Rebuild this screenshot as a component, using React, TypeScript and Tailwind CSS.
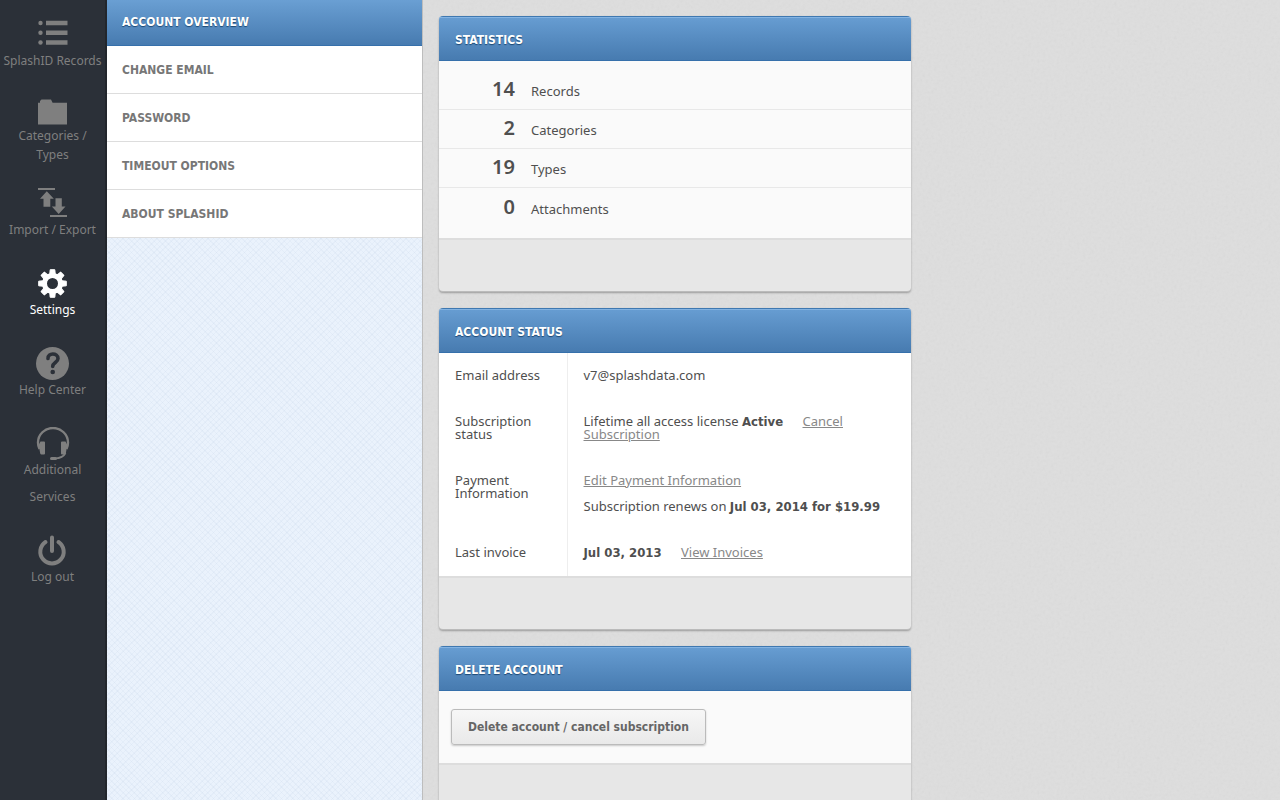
import type { ReactNode } from 'react';

type NavItem = {
  lines: string[];
  icon: ReactNode;
  active?: boolean;
  tight?: boolean;
  spaced?: boolean;
};

const navItems: NavItem[] = [
  {
    lines: ['SplashID Records'],
    tight: true,
    icon: (
      <>
        <circle cx="4.500" cy="5" r="2.2" />
        <circle cx="4.500" cy="14.700" r="2.2" />
        <circle cx="4.500" cy="24.500" r="2.2" />
        <path d="M10 2.800h21.500v4.500H10zM10 12.500h21.500V17H10zM10 22.300h21.500v4.500H10z" />
      </>
    ),
  },
  {
    lines: ['Categories /', 'Types'],
    tight: true,
    icon: <path d="M2 9.800h2V8L5.500 6.500h9.500L16.500 9.500v.3H31v21.700H2z" />,
  },
  {
    lines: ['Import / Export'],
    icon: (
      <path d="M2 1h17v2H2zM10.800 4.300l7 7.500h-3.500v8H7.500v-8H4zM19.500 11.300h6.300v8.200h3.700l-6.800 7.500-6.900-7.500h3.700zM14 28h17v2H14z" />
    ),
  },
  {
    lines: ['Settings'],
    active: true,
    icon: (
      <>
        <circle cx="16.500" cy="16.500" r="8" fill="none" stroke="currentColor" strokeWidth="5" />
        {[0, 45, 90, 135, 180, 225, 270, 315].map((angle) => (
          <path
            key={angle}
            d="M13.700 7.500l.5-4.800h4.600l.5 4.800z"
            strokeWidth="1"
            stroke="currentColor"
            strokeLinejoin="round"
            transform={`rotate(${angle} 16.5 16.5)`}
          />
        ))}
      </>
    ),
  },
  {
    lines: ['Help Center'],
    icon: (
      <>
        <circle cx="16.500" cy="16.500" r="16.500" />
        <path d="M12 11.500C11.500 5.500 22 5.500 22 11.500c0 4-5.300 4-5.300 8" fill="none" stroke="#2b3038" strokeWidth="3.600" strokeLinecap="round" />
        <circle cx="16.700" cy="25" r="2.300" fill="#2b3038" />
      </>
    ),
  },
  {
    lines: ['Additional', 'Services'],
    spaced: true,
    icon: (
      <>
        <path d="M3.500 22C2 19 2 17 2 15.500a15 14.500 0 0 1 30 0c0 1.500 0 3.500-1.500 6.500" fill="none" stroke="currentColor" strokeWidth="2.400" />
        <path d="M4.500 14.500H8q1 0 1 1v11q0 1-1 1H5.500q-1 0-1.300-1L2.700 18zM29.500 14.500H26q-1 0-1 1v11q0 1 1 1h2.500q1 0 1.300-1l1.500-8.500z" />
        <path d="M29.500 26c-2 4-5 5.200-10.500 5.500" fill="none" stroke="currentColor" strokeWidth="1.700" />
        <rect x="14" y="30" width="7" height="3" rx="1.500" />
      </>
    ),
  },
  {
    lines: ['Log out'],
    icon: (
      <path d="M9.500 8a11.700 11.700 0 1 0 13 0M16 3.500V17" fill="none" stroke="currentColor" strokeWidth="4" strokeLinecap="round" />
    ),
  },
];

const menu = ['Change Email', 'Password', 'Timeout Options', 'About SplashID'];

const stats = [
  { value: 14, label: 'Records' },
  { value: 2, label: 'Categories' },
  { value: 19, label: 'Types' },
  { value: 0, label: 'Attachments' },
];

const linkClass = 'text-[#888888] underline hover:text-[#555555]';
const labelCell = 'border-r border-[#eeeeee] px-4 pt-4 pb-[17px] font-normal';
const valueCell = 'px-4 pt-4 pb-[17px]';
const strongClass = "font-['DejaVu_Sans_Condensed','DejaVu_Sans',sans-serif] leading-[11px] font-bold";

function Panel({ title, children }: { title: string; children: ReactNode }) {
  return (
    <section className="overflow-hidden rounded-[4px] border-b border-[#bbbbbb] bg-[#e7e7e7] shadow-[0_1px_2px_rgba(0,0,0,0.3)]">
      <h2 className="flex h-[45px] items-center border-t border-b border-t-[#3f78b0] border-b-[#3670ab] bg-linear-to-b from-[#679dd2] to-[#477bb0] px-4 pt-[2px] font-['DejaVu_Sans_Condensed','DejaVu_Sans',sans-serif] text-xs font-bold text-white uppercase shadow-[inset_0_1px_0_#83b3e2] [text-shadow:0_1px_1px_#1d4873]">
        {title}
      </h2>
      {children}
      <div className="h-[53px] border-t-2 border-t-[#dddddd]" />
    </section>
  );
}

export default function App() {
  return (
    <div className="flex h-screen overflow-hidden bg-[#dedede] font-['Noto_Sans',sans-serif] text-[13px] text-[#4f4f4f]">
      <nav className="w-[107px] shrink-0 border-r-2 border-[#22262c] bg-[#2b3038] pt-[18px]">
        {navItems.map((item) => (
          <a
            key={item.lines[0]}
            href="#"
            className={`flex flex-col items-center text-xs leading-[19px] whitespace-nowrap ${item.tight ? 'mb-[23px]' : 'mb-7'} ${item.active ? 'text-white' : 'text-[#7f7f7f]'}`}
          >
            <svg viewBox="0 0 34 33" className="h-[33px] w-[34px]" fill="currentColor" aria-hidden="true">
              {item.icon}
            </svg>
            <span className={`flex flex-col items-center ${item.spaced ? 'gap-2' : ''}`}>
              {item.lines.map((line) => (
                <span key={line}>{line}</span>
              ))}
            </span>
          </a>
        ))}
      </nav>

      <aside className="w-[316px] shrink-0 border-r border-[#bdbdbd] bg-[#eaf2fc] bg-[repeating-linear-gradient(45deg,rgba(120,150,190,0.06)_0_1px,transparent_1px_4px),repeating-linear-gradient(-45deg,rgba(120,150,190,0.06)_0_1px,transparent_1px_4px)] font-['DejaVu_Sans_Condensed','DejaVu_Sans',sans-serif]">
        <a
          href="#"
          className="flex h-[46px] items-center border-b border-[#3670ab] bg-linear-to-b from-[#6a9fd3] to-[#477bb0] px-[15px] pb-[2px] text-xs font-bold text-white uppercase [text-shadow:0_1px_1px_#1d4873]"
        >
          Account Overview
        </a>
        {menu.map((label) => (
          <a
            key={label}
            href="#"
            className="flex h-12 items-center border-b border-[#dddddd] bg-white px-[15px] text-xs font-bold text-[#777777] uppercase"
          >
            {label}
          </a>
        ))}
      </aside>

      <main className="relative min-w-0 flex-1 p-4">
        {/* paper grain behind the panels */}
        <svg className="pointer-events-none absolute inset-0 h-full w-full opacity-8" aria-hidden="true">
          <filter id="grain">
            <feTurbulence type="fractalNoise" baseFrequency="0.35" numOctaves="2" />
            <feColorMatrix type="saturate" values="0" />
          </filter>
          <rect width="100%" height="100%" filter="url(#grain)" />
        </svg>

        <div className="relative flex max-w-[472px] flex-col gap-4">
          <Panel title="Statistics">
            <ul className="bg-[#fafafa] pt-[10px] pb-[11px]">
              {stats.map((stat) => (
                <li key={stat.label} className="flex h-[39px] items-center gap-4 border-b border-[#e8e8e8] last:border-b-0">
                  <span className="w-19 pb-[2px] text-right text-xl font-semibold">{stat.value}</span>
                  <span className="pt-1">{stat.label}</span>
                </li>
              ))}
            </ul>
          </Panel>

          <Panel title="Account Status">
            <table className="w-full bg-white text-left leading-[13px]">
              <tbody className="align-top">
                <tr>
                  <th scope="row" className={`w-32 ${labelCell}`}>Email address</th>
                  <td className={valueCell}>v7@splashdata.com</td>
                </tr>
                <tr>
                  <th scope="row" className={labelCell}>Subscription status</th>
                  <td className={valueCell}>
                    Lifetime all access license <strong className={`mr-4 ${strongClass}`}>Active</strong>{' '}
                    <a href="#" className={linkClass}>Cancel Subscription</a>
                  </td>
                </tr>
                <tr>
                  <th scope="row" className={labelCell}>Payment Information</th>
                  <td className={valueCell}>
                    <a href="#" className={linkClass}>Edit Payment Information</a>
                    <p className="mt-[13px]">
                      Subscription renews on <strong className={strongClass}>Jul 03, 2014 for $19.99</strong>
                    </p>
                  </td>
                </tr>
                <tr>
                  <th scope="row" className={labelCell}>Last invoice</th>
                  <td className={valueCell}>
                    <strong className={`mr-4 ${strongClass}`}>Jul 03, 2013</strong>{' '}
                    <a href="#" className={linkClass}>View Invoices</a>
                  </td>
                </tr>
              </tbody>
            </table>
          </Panel>

          <Panel title="Delete Account">
            <div className="bg-[#fafafa] px-3 pt-[18px] pb-[18px]">
              <button
                type="button"
                className="h-9 rounded-[3px] border border-[#bbbbbb] bg-linear-to-b from-[#f7f7f7] to-[#e9e9e9] px-4 font-['DejaVu_Sans_Condensed','DejaVu_Sans',sans-serif] text-xs font-bold text-[#666666] shadow-[0_1px_2px_rgba(0,0,0,0.2)]"
              >
                Delete account / cancel subscription
              </button>
            </div>
          </Panel>
        </div>
      </main>
    </div>
  );
}
